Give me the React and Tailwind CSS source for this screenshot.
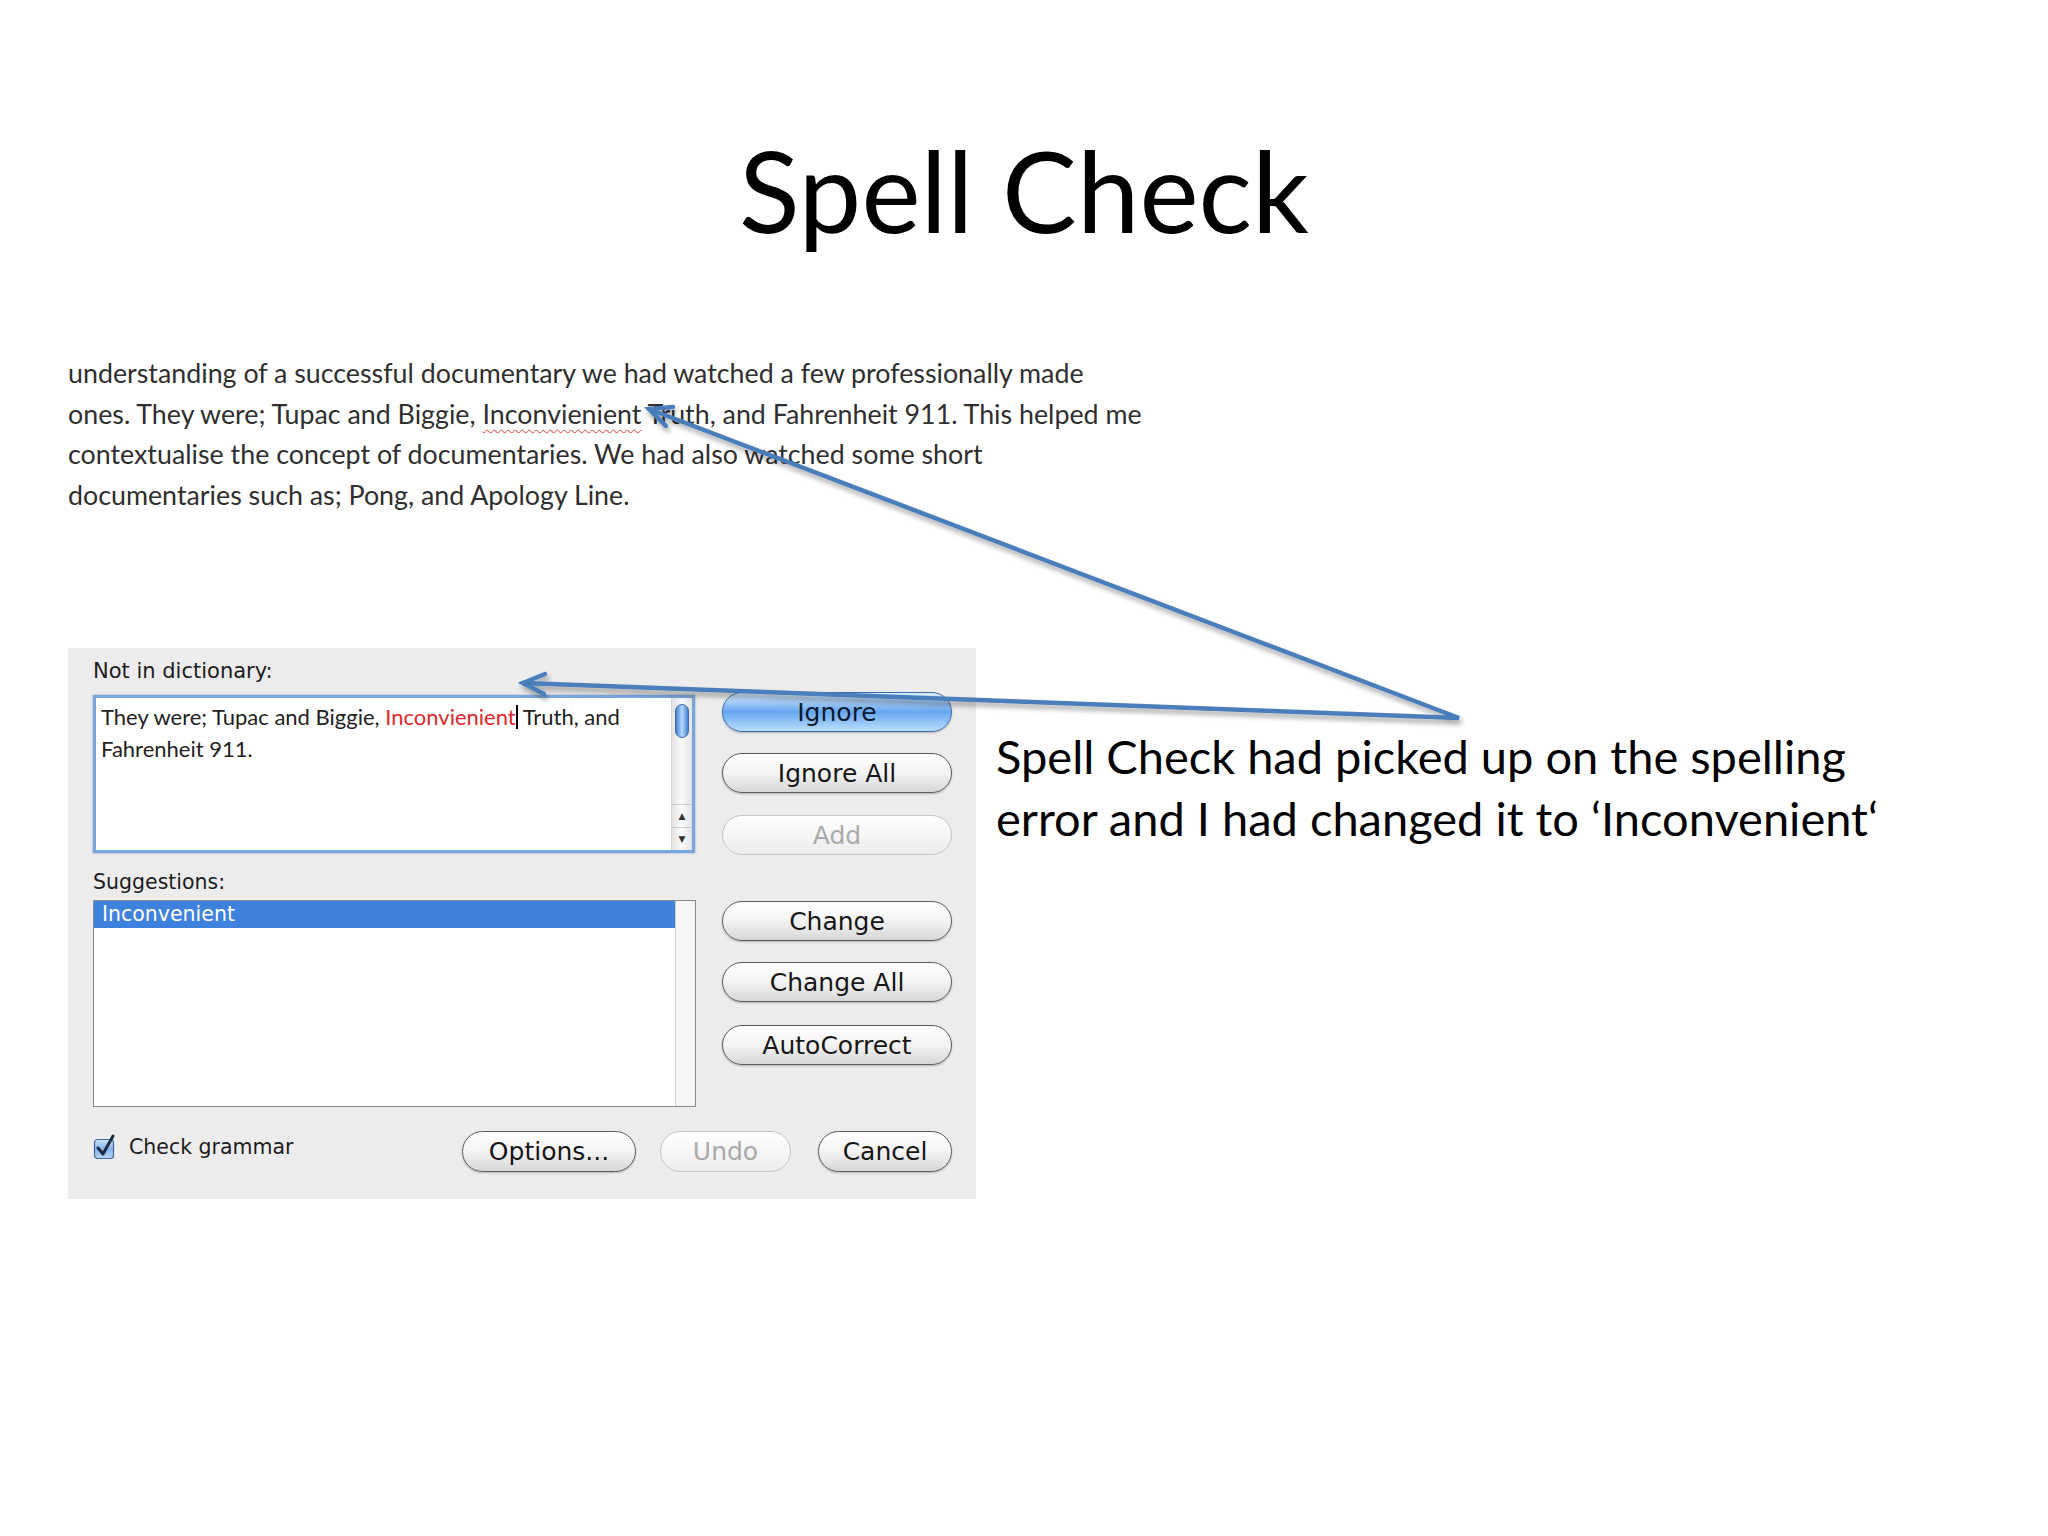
import React from 'react';

const Button = ({ label, kind = 'normal', className = '' }) => {
  const base = 'flex items-center justify-center rounded-full border-[1.5px] font-["DejaVu_Sans",sans-serif] text-[25px] leading-none shadow-[0_1px_2px_rgba(0,0,0,0.25)]';
  const styles = {
    normal: 'border-[#5c5c5c] bg-linear-to-b from-white via-[#f3f3f3] to-[#d6d6d6] text-[#161616]',
    primary: 'border-[#3d6cae] bg-linear-to-b from-[#dcefff] via-[#66a6ee] to-[#b9defc] text-[#0c1a2e]',
    disabled: 'border-[#c4c4c4] bg-linear-to-b from-white to-[#ececec] text-[#a9a9a9] shadow-none',
  };
  return <div className={`${base} ${styles[kind]} ${className}`}>{label}</div>;
};

const Checkbox = () => (
  <svg width="24" height="26" viewBox="0 0 24 26">
    <defs>
      <linearGradient id="cb" x1="0" y1="0" x2="0" y2="1">
        <stop offset="0" stopColor="#cfe4fb" />
        <stop offset="0.5" stopColor="#7fb2ea" />
        <stop offset="1" stopColor="#b8dafb" />
      </linearGradient>
    </defs>
    <rect x="1.5" y="5.5" width="19" height="19" rx="3" fill="url(#cb)" stroke="#47689a" strokeWidth="1.2" />
    <path d="M5 14 L10 20 L20 2" fill="none" stroke="#1b2a45" strokeWidth="3" strokeLinejoin="round" strokeLinecap="round" />
  </svg>
);

const Arrows = () => (
  <svg className="absolute left-0 top-0 pointer-events-none" width="2048" height="1536" viewBox="0 0 2048 1536">
    <defs>
      <filter id="sh" x="-10%" y="-10%" width="120%" height="120%">
        <feDropShadow dx="2" dy="4" stdDeviation="2.5" floodColor="#000" floodOpacity="0.35" />
      </filter>
    </defs>
    <g fill="none" stroke="#4a7ebb" strokeWidth="4.5" strokeLinecap="round" strokeLinejoin="miter" filter="url(#sh)">
      <polyline points="649,409 1459,718 523,683" />
      <polyline points="666,426 649,409 673,407" />
      <polyline points="544,694 523,683 545,674" />
    </g>
  </svg>
);

export default function App() {
  const calibri = "font-['Lato','Open_Sans',sans-serif]";
  return (
    <div className="relative w-[2048px] h-[1536px] overflow-hidden bg-white">
      <h1 className={`${calibri} pt-[134px] text-center text-[112px] leading-none font-normal text-black`}>Spell Check</h1>

      <div className={`${calibri} mt-[107px] ml-[68px] text-[26.8px] leading-[40.5px] text-[#2f2f2f] whitespace-nowrap`}>
        <div>understanding of a successful documentary we had watched a few professionally made</div>
        <div>
          ones. They were; Tupac and Biggie,{' '}
          <span className="underline decoration-wavy decoration-[#e03a3a] decoration-1 underline-offset-[5px]">Inconvienient</span>{' '}
          Truth, and Fahrenheit 911. This helped me
        </div>
        <div>contextualise the concept of documentaries. We had also watched some short</div>
        <div>documentaries such as; Pong, and Apology Line.</div>
      </div>

      <div className="mt-[133px] flex items-start">
        <div className="ml-[68px] w-[908px] h-[551px] bg-[#ececec] pl-[25px] pr-[24px] pt-[11px] font-['DejaVu_Sans',sans-serif] text-[#1c1c1c]">
          <div className="flex gap-[26px]">
            <div className="w-[603px]">
              <div className="h-[24px] text-[21px] leading-[24px]">Not in dictionary:</div>
              <div className="mt-[12px] flex h-[158px] w-[602px] border-[3px] border-[#7ba6dc] bg-white shadow-[0_0_2px_rgba(60,110,190,0.6)]">
                <div className={`${calibri} flex-1 pl-[5px] pt-[3px] text-[22px] leading-[32px] text-[#222]`}>
                  <div>
                    They were; Tupac and Biggie, <span className="text-[#e3262b]">Inconvienient</span>
                    <span className="inline-block h-[24px] w-[2px] translate-y-[4px] bg-black"></span> Truth, and
                  </div>
                  <div>Fahrenheit 911.</div>
                </div>
                <div className="flex w-[21px] flex-col border-l border-[#d6d6d6] bg-linear-to-r from-[#e2e2e2] via-[#fbfbfb] to-[#e2e2e2]">
                  <div className="mx-auto mt-[6px] h-[34px] w-[14px] rounded-full border border-[#3e6aa6] bg-linear-to-r from-[#3f7fd0] via-[#b6dbff] to-[#3f7fd0]"></div>
                  <div className="flex-1"></div>
                  <div className="flex h-[23px] items-center justify-center border-t border-[#c8c8c8] text-[9px] leading-none text-[#333]">▲</div>
                  <div className="flex h-[23px] items-center justify-center border-t border-[#c8c8c8] text-[9px] leading-none text-[#333]">▼</div>
                </div>
              </div>
              <div className="mt-[17px] h-[24px] text-[20.5px] leading-[24px]">Suggestions:</div>
              <div className="mt-[6px] flex h-[207px] w-[603px] border border-[#8a8a8a] bg-white">
                <div className="flex-1">
                  <div className="h-[27px] bg-[#3f82de] pl-[8px] text-[20.5px] leading-[27px] text-white">Inconvenient</div>
                </div>
                <div className="w-[20px] border-l border-[#cfcfcf] bg-[#f5f5f5]"></div>
              </div>
            </div>
            <div className="mt-[33px] flex w-[230px] flex-col">
              <Button label="Ignore" kind="primary" className="h-[40px]" />
              <Button label="Ignore All" className="mt-[21px] h-[40px]" />
              <Button label="Add" kind="disabled" className="mt-[22px] h-[40px]" />
              <Button label="Change" className="mt-[46px] h-[40px]" />
              <Button label="Change All" className="mt-[21px] h-[40px]" />
              <Button label="AutoCorrect" className="mt-[23px] h-[40px]" />
            </div>
          </div>
          <div className="mt-[24px] flex items-center">
            <div className="mb-[9px] flex items-center">
              <Checkbox />
              <span className="ml-[12px] text-[20.5px]">Check grammar</span>
            </div>
            <div className="flex-1"></div>
            <Button label="Options..." className="h-[41px] w-[174px]" />
            <Button label="Undo" kind="disabled" className="ml-[24px] h-[41px] w-[131px]" />
            <Button label="Cancel" className="ml-[27px] h-[41px] w-[134px]" />
          </div>
        </div>
        <div className={`${calibri} ml-[20px] mt-[77px] text-[47px] leading-[62px] text-black whitespace-nowrap`}>
          <div>Spell Check had picked up on the spelling</div>
          <div>error and I had changed it to ‘Inconvenient‘</div>
        </div>
      </div>

      <Arrows />
    </div>
  );
}
